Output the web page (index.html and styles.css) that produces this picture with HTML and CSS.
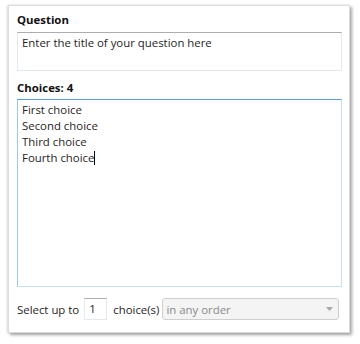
FILE: index.html
```html
<!DOCTYPE html>
<html>
<head>
<meta charset="utf-8">
<link rel="stylesheet" href="styles.css">
</head>
<body>
<div class="panel">
  <div class="label">Question</div>
  <div class="box question">Enter the title of your question here</div>
  <div class="label choices-label">Choices: 4</div>
  <div class="box choices">
    <div>First choice</div>
    <div>Second choice</div>
    <div>Third choice</div>
    <div>Fourth choice<span class="caret"></span></div>
  </div>
  <div class="footer">
    <span>Select up to</span>
    <span class="num">1</span>
    <span>choice(s)</span>
    <div class="select">
      <span>in any order</span>
      <svg width="7" height="4" viewBox="0 0 7 4"><path d="M0 0H7L3.5 4Z" fill="#a8a8a8"/></svg>
    </div>
  </div>
</div>
</body>
</html>
```
FILE: styles.css
```css
html, body { margin: 0; padding: 0; background: #fff; }
body {
  font-family: "Open Sans", "Noto Sans", sans-serif;
  font-size: 11.4px;
  color: #1e1e1e;
  width: 360px;
  height: 344px;
  overflow: hidden;
}
.panel {
  box-sizing: border-box;
  margin: 5px 0 0 8px;
  width: 342px;
  height: 328px;
  background: #fff;
  border: 1px solid #dcdcdc;
  box-shadow: 2px 2px 3px rgba(0,0,0,0.35), -1px 0 2px rgba(0,0,0,0.15);
  padding: 6px 7px 0 8px;
  display: flex;
  flex-direction: column;
}
.label {
  font-weight: 700;
  line-height: 16px;
  height: 20px;
  color: #111;
}
.box {
  box-sizing: border-box;
  border: 1px solid #e3e9ef;
  border-top-color: #abadb3;
  padding: 2px 4px;
  line-height: 16px;
}
.question { height: 39px; margin-bottom: 9px; }
.choices-label { height: 19px; }
.choices {
  height: 188px;
  border-color: #c5e1f5;
  border-top-color: #569de5;
  border-left-color: #9cc8ec;
  padding-top: 2px;
}
.caret {
  display: inline-block;
  width: 1px;
  height: 14px;
  background: #000;
  vertical-align: -3px;
}
.footer {
  display: flex;
  align-items: center;
  margin-top: 11px;
  height: 22px;
}
.num {
  box-sizing: border-box;
  width: 23px;
  height: 22px;
  border: 1px solid #e3e9ef;
  border-top-color: #abadb3;
  padding: 2px 4px;
  margin: 0 6px 0 5px;
  line-height: 16px;
}
.select {
  box-sizing: border-box;
  margin-left: 3px;
  flex: 1;
  height: 22px;
  margin-right: 3px;
  border: 1px solid #cfcfcf;
  border-radius: 3px;
  background: #f4f4f4;
  color: #8a8a8a;
  display: flex;
  align-items: center;
  justify-content: space-between;
  padding: 0 5px 0 3px;
}
```
